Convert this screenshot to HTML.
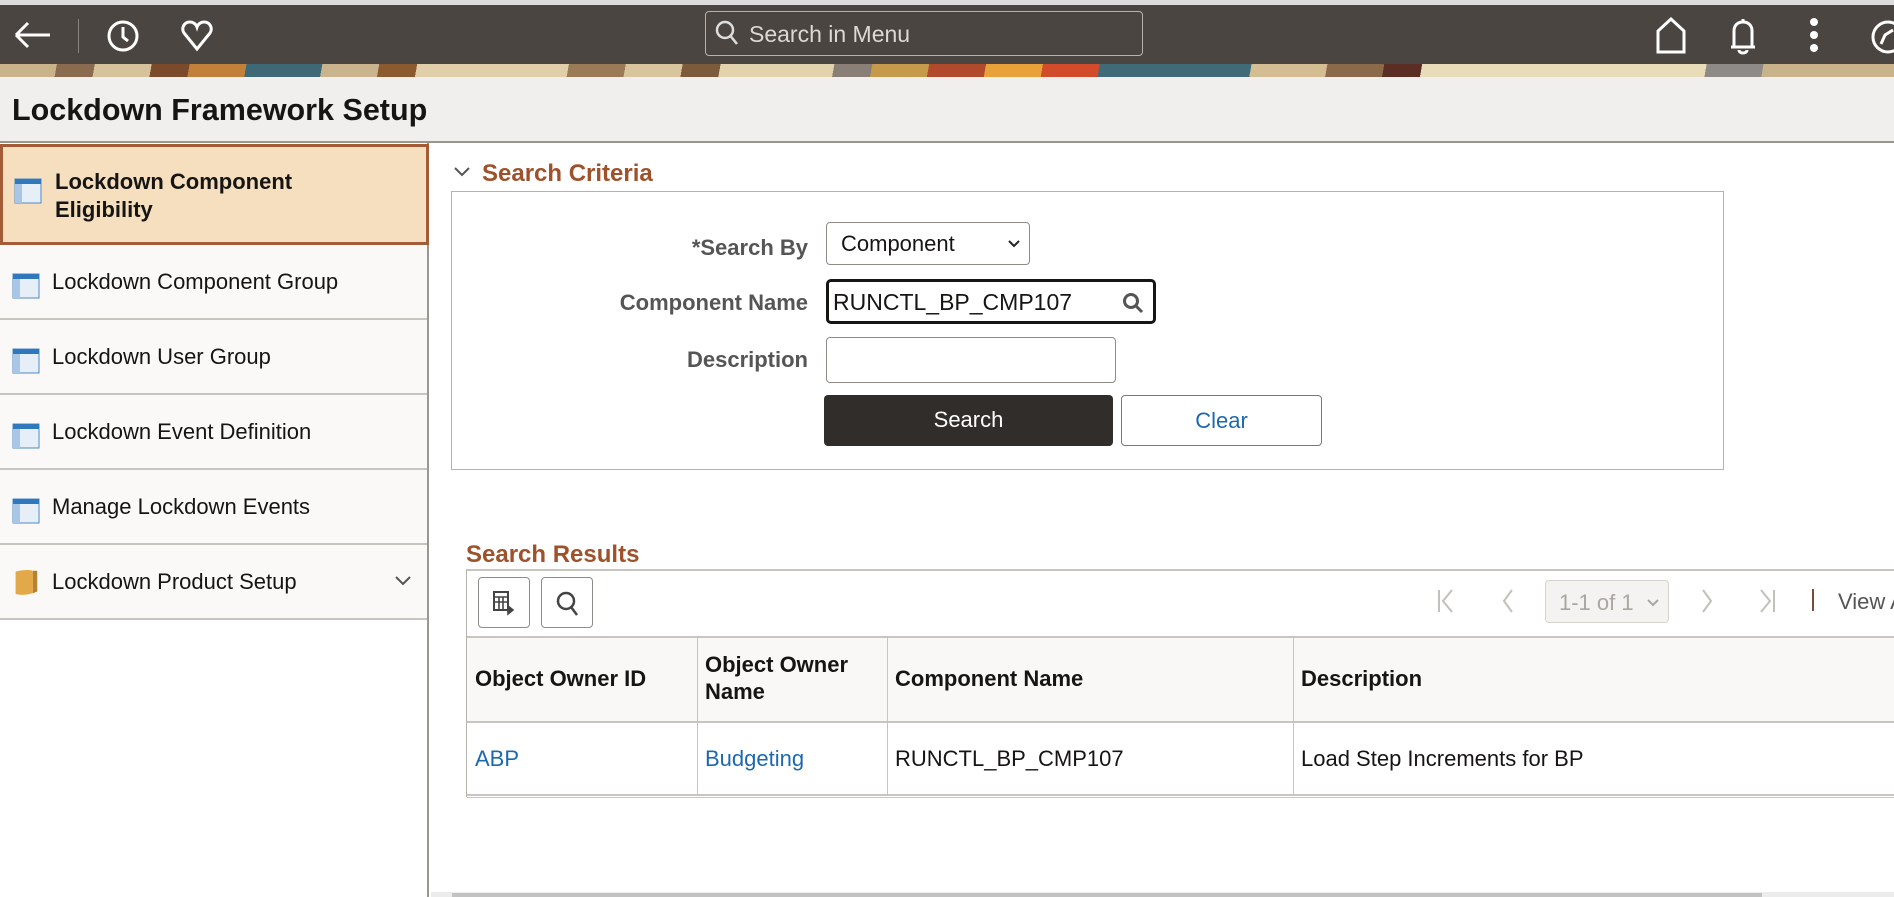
<!DOCTYPE html>
<html><head><meta charset="utf-8"><style>
*{box-sizing:border-box;margin:0;padding:0}
body{width:1894px;height:897px;overflow:hidden;background:#fff;font-family:"Liberation Sans",Arial,sans-serif;position:relative;color:#000}
.abs{position:absolute;white-space:nowrap}
#top{left:0;top:0;width:1894px;height:5px;background:#dcdcdc}
#bar{left:0;top:5px;width:1894px;height:59px;background:#4a4540}
#banner{left:0;top:64px;width:1894px;height:13px;background:linear-gradient(100deg,#c9b38a 0 3%,#8a6b4f 3% 5%,#d6c39c 5% 8%,#7a4a2a 8% 10%,#c2813a 10% 13%,#3e6876 13% 17%,#c9b48e 17% 20%,#8c5a2f 20% 22%,#e0cfa8 22% 30%,#9b7a57 30% 33%,#d8c59d 33% 36%,#7c5a3c 36% 38%,#e3d3ad 38% 44%,#8a7f77 44% 46%,#c59a4b 46% 49%,#b04a2a 49% 52%,#e8a23a 52% 55%,#d24b2b 55% 58%,#3f6b79 58% 66%,#d4bd93 66% 70%,#8a6a4a 70% 73%,#5a2e24 73% 75%,#e9dcb9 75% 90%,#8d8a88 90% 93%,#c9b38a 93%)}
#titlebar{left:0;top:77px;width:1894px;height:66px;background:#f1efed;border-bottom:2px solid #999690}
#title{left:12px;top:93px;font-size:30.5px;font-weight:bold;color:#161513}
#side{left:0;top:143px;width:429px;height:754px;background:#fff;border-right:2px solid #9a9691}
.item{position:absolute;left:0;width:427px;height:75px;border-bottom:2px solid #c8c4c0;font-size:22px;color:#161513;background:#faf9f8}
.item span{position:absolute;left:52px;top:24px;white-space:nowrap}
.ic{position:absolute;left:12px;top:28px;width:28px;height:26px}
#sel{left:0;top:144px;width:429px;height:101px;background:#f5dfbf;border:3px solid #a35c36}
#sel span{position:absolute;left:52px;top:21px;font-size:22px;font-weight:bold;line-height:28px;color:#161513}
.h2{font-size:24px;font-weight:bold;color:#9e522c}
#crit{left:451px;top:191px;width:1273px;height:279px;border:1px solid #b5b2ae}
.lbl{position:absolute;font-size:22px;font-weight:bold;color:#555;text-align:right;width:340px;left:468px}
.inp{position:absolute;border:1px solid #8f8b87;border-radius:4px;background:#fff}
.btn{position:absolute;border-radius:4px;font-size:22px;text-align:center;line-height:49px}
#grid{left:466px;top:569px;width:1428px;height:228px;border-left:1px solid #b5b2ae;border-top:2px solid #c8c4c0}
.th{position:absolute;font-size:22px;font-weight:bold;color:#161513;line-height:27px;white-space:nowrap}
.td{position:absolute;font-size:22px;color:#161513;white-space:nowrap}
.vl{position:absolute;width:1px;background:#c8c4c0}
.tb{position:absolute;top:577px;width:52px;height:51px;border:1px solid #8f8b87;border-radius:4px;background:#fff}
</style></head><body>
<div id="top" class="abs"></div>
<div id="bar" class="abs">
<svg class="abs" style="left:12px;top:14px" width="42" height="32" viewBox="0 0 42 32"><path d="M4 16H38M4 16L16 4M4 16L16 28" stroke="#fff" stroke-width="3" fill="none"/></svg>
<div class="abs" style="left:78px;top:14px;width:1px;height:34px;background:#8a847e"></div>
<svg class="abs" style="left:106px;top:13px" width="34" height="36" viewBox="0 0 34 36"><circle cx="17" cy="18" r="14" stroke="#fff" stroke-width="3" fill="none"/><path d="M17 9V19L22 23" stroke="#fff" stroke-width="3" fill="none"/></svg>
<svg class="abs" style="left:180px;top:14px" width="34" height="34" viewBox="0 0 34 34"><path d="M17 30L4 14C1 9 4 3 10 3C13 3 16 5 17 8C18 5 21 3 24 3C30 3 33 9 30 14Z" stroke="#fff" stroke-width="3" fill="none"/></svg>
<div class="abs" style="left:705px;top:6px;width:438px;height:45px;border:1px solid #b8b2ac;border-radius:4px"></div>
<svg class="abs" style="left:714px;top:14px" width="26" height="28" viewBox="0 0 26 28"><circle cx="11" cy="11" r="8" stroke="#ddd" stroke-width="2.5" fill="none"/><path d="M16.5 17L23 25" stroke="#ddd" stroke-width="2.5"/></svg>
<div class="abs" style="left:749px;top:16px;font-size:23px;color:#ddd8d3">Search in Menu</div>
<svg class="abs" style="left:1655px;top:12px" width="32" height="38" viewBox="0 0 32 38"><path d="M3 35V14L16 2L29 14V35Z" stroke="#fff" stroke-width="3" fill="none"/></svg>
<svg class="abs" style="left:1728px;top:12px" width="30" height="40" viewBox="0 0 30 40"><path d="M6 30V14C6 8 10 5 15 5C20 5 24 8 24 14V30M3 30H27M11 33C11 37 19 37 19 33M15 2V5" stroke="#fff" stroke-width="3" fill="none"/></svg>
<div class="abs" style="left:1810px;top:13px;width:8px;height:8px;border-radius:50%;background:#fff"></div>
<div class="abs" style="left:1810px;top:26px;width:8px;height:8px;border-radius:50%;background:#fff"></div>
<div class="abs" style="left:1810px;top:39px;width:8px;height:8px;border-radius:50%;background:#fff"></div>
<svg class="abs" style="left:1866px;top:12px" width="28" height="40" viewBox="0 0 28 40"><circle cx="22" cy="20" r="15" stroke="#fff" stroke-width="3" fill="none"/><path d="M15 27L19 18L27 13" stroke="#fff" stroke-width="3" fill="none"/></svg>
</div>
<div id="banner" class="abs"></div>
<div id="titlebar" class="abs"></div>
<div id="title" class="abs">Lockdown Framework Setup</div>

<div id="side" class="abs"></div>
<div id="sel" class="abs"><svg class="ic" style="left:11px;top:31px" viewBox="0 0 28 26"><rect x="1" y="1" width="26" height="24" fill="#e6eef8" stroke="#4f8ac4"/><rect x="1" y="1" width="26" height="5" fill="#2f78be"/><rect x="1" y="6" width="7" height="19" fill="#a9c6e6"/></svg><span>Lockdown Component<br>Eligibility</span></div>
<div class="item" style="top:245px"><svg class="ic" viewBox="0 0 28 26"><rect x="1" y="1" width="26" height="24" fill="#e6eef8" stroke="#4f8ac4"/><rect x="1" y="1" width="26" height="5" fill="#2f78be"/><rect x="1" y="6" width="7" height="19" fill="#a9c6e6"/></svg><span>Lockdown Component Group</span></div>
<div class="item" style="top:320px"><svg class="ic" viewBox="0 0 28 26"><rect x="1" y="1" width="26" height="24" fill="#e6eef8" stroke="#4f8ac4"/><rect x="1" y="1" width="26" height="5" fill="#2f78be"/><rect x="1" y="6" width="7" height="19" fill="#a9c6e6"/></svg><span>Lockdown User Group</span></div>
<div class="item" style="top:395px"><svg class="ic" viewBox="0 0 28 26"><rect x="1" y="1" width="26" height="24" fill="#e6eef8" stroke="#4f8ac4"/><rect x="1" y="1" width="26" height="5" fill="#2f78be"/><rect x="1" y="6" width="7" height="19" fill="#a9c6e6"/></svg><span>Lockdown Event Definition</span></div>
<div class="item" style="top:470px"><svg class="ic" viewBox="0 0 28 26"><rect x="1" y="1" width="26" height="24" fill="#e6eef8" stroke="#4f8ac4"/><rect x="1" y="1" width="26" height="5" fill="#2f78be"/><rect x="1" y="6" width="7" height="19" fill="#a9c6e6"/></svg><span>Manage Lockdown Events</span></div>
<div class="item" style="top:545px"><svg class="ic" style="top:24px" viewBox="0 0 28 30"><path d="M2 3Q14 0 22 2V28Q12 31 2 29Z" fill="#e2a94a"/><path d="M22 2H27V26L22 28Z" fill="#b5822f"/></svg><span>Lockdown Product Setup</span><svg class="abs" style="left:394px;top:30px" width="18" height="12" viewBox="0 0 18 12"><path d="M2 2L9 9L16 2" stroke="#555" stroke-width="2" fill="none"/></svg></div>

<svg class="abs" style="left:453px;top:165px" width="18" height="14" viewBox="0 0 18 14"><path d="M2 3L9 10L16 3" stroke="#555" stroke-width="2" fill="none"/></svg>
<div class="abs h2" style="left:482px;top:160px">Search Criteria</div>
<div id="crit" class="abs"></div>
<div class="lbl" style="top:235px">*Search By</div>
<div class="lbl" style="top:290px">Component Name</div>
<div class="lbl" style="top:347px">Description</div>
<div class="inp" style="left:826px;top:222px;width:204px;height:43px"><span class="abs" style="left:14px;top:8px;font-size:22px;color:#161513">Component</span><svg class="abs" style="left:180px;top:16px" width="14" height="10" viewBox="0 0 14 10"><path d="M2 2L7 7L12 2" stroke="#222" stroke-width="2" fill="none"/></svg></div>
<div class="inp" style="left:826px;top:279px;width:330px;height:45px;border:3px solid #161513;border-radius:5px"><span class="abs" style="left:4px;top:7px;font-size:23px;color:#161513">RUNCTL_BP_CMP107</span><svg class="abs" style="left:292px;top:9px" width="24" height="24" viewBox="0 0 24 24"><circle cx="10" cy="10" r="6.5" stroke="#555" stroke-width="3" fill="none"/><path d="M15 15L21 21" stroke="#555" stroke-width="3"/></svg></div>
<div class="inp" style="left:826px;top:337px;width:290px;height:46px"></div>
<div class="btn" style="left:824px;top:395px;width:289px;height:51px;background:#312d2a;color:#fff">Search</div>
<div class="btn" style="left:1121px;top:395px;width:201px;height:51px;border:1px solid #7b7773;color:#1d69ad;line-height:49px">Clear</div>

<div class="abs h2" style="left:466px;top:541px">Search Results</div>
<div id="grid" class="abs"></div>
<div class="tb" style="left:478px"><svg class="abs" style="left:13px;top:12px" width="24" height="26" viewBox="0 0 24 26"><rect x="2" y="2" width="14" height="18" fill="none" stroke="#444" stroke-width="2"/><path d="M2 7H16M2 12H16M7 7V20M11 7V20M16 16L21 20L16 24Z" stroke="#444" stroke-width="1.6" fill="#444"/></svg></div>
<div class="tb" style="left:541px"><svg class="abs" style="left:13px;top:12px" width="26" height="28" viewBox="0 0 26 28"><circle cx="11" cy="11" r="8" stroke="#444" stroke-width="2.5" fill="none"/><path d="M16 17L22 25" stroke="#444" stroke-width="2.5"/></svg></div>
<svg class="abs" style="left:1436px;top:588px" width="20" height="26" viewBox="0 0 20 26"><path d="M3 2V24M16 2L7 13L16 24" stroke="#c3c0bc" stroke-width="2" fill="none"/></svg>
<svg class="abs" style="left:1500px;top:588px" width="16" height="26" viewBox="0 0 16 26"><path d="M12 2L4 13L12 24" stroke="#c3c0bc" stroke-width="2" fill="none"/></svg>
<div class="abs" style="left:1545px;top:580px;width:124px;height:43px;border:1px solid #d6d3cf;border-radius:4px;background:#f4f3f1"><span class="abs" style="left:13px;top:9px;font-size:22px;color:#aaa6a2">1-1 of 1</span><svg class="abs" style="left:100px;top:17px" width="14" height="10" viewBox="0 0 14 10"><path d="M2 2L7 7L12 2" stroke="#aaa6a2" stroke-width="2" fill="none"/></svg></div>
<svg class="abs" style="left:1699px;top:588px" width="16" height="26" viewBox="0 0 16 26"><path d="M4 2L12 13L4 24" stroke="#c3c0bc" stroke-width="2" fill="none"/></svg>
<svg class="abs" style="left:1757px;top:588px" width="20" height="26" viewBox="0 0 20 26"><path d="M17 2V24M4 2L13 13L4 24" stroke="#c3c0bc" stroke-width="2" fill="none"/></svg>
<div class="abs" style="left:1812px;top:589px;width:2px;height:22px;background:#7a4a3a"></div>
<div class="abs" style="left:1838px;top:589px;font-size:22px;color:#555">View All</div>

<div class="abs" style="left:467px;top:636px;width:1427px;height:87px;background:#f9f8f7;border-top:2px solid #c8c4c0;border-bottom:2px solid #c8c4c0"></div>
<div class="vl" style="left:697px;top:637px;height:158px"></div>
<div class="vl" style="left:887px;top:637px;height:158px"></div>
<div class="vl" style="left:1293px;top:637px;height:158px"></div>
<div class="th" style="left:475px;top:665px">Object Owner ID</div>
<div class="th" style="left:705px;top:651px">Object Owner<br>Name</div>
<div class="th" style="left:895px;top:665px">Component Name</div>
<div class="th" style="left:1301px;top:665px">Description</div>
<div class="td" style="left:475px;top:746px;color:#1d69ad">ABP</div>
<div class="td" style="left:705px;top:746px;color:#1d69ad">Budgeting</div>
<div class="td" style="left:895px;top:746px">RUNCTL_BP_CMP107</div>
<div class="td" style="left:1301px;top:746px">Load Step Increments for BP</div>
<div class="abs" style="left:467px;top:794px;width:1427px;height:4px;border-top:2px solid #c8c4c0;border-bottom:1px solid #c8c4c0"></div>
<div class="abs" style="left:431px;top:892px;width:1463px;height:5px;background:#ececec"></div>
<div class="abs" style="left:452px;top:893px;width:1310px;height:4px;background:#c2c2c2"></div>
</body></html>
